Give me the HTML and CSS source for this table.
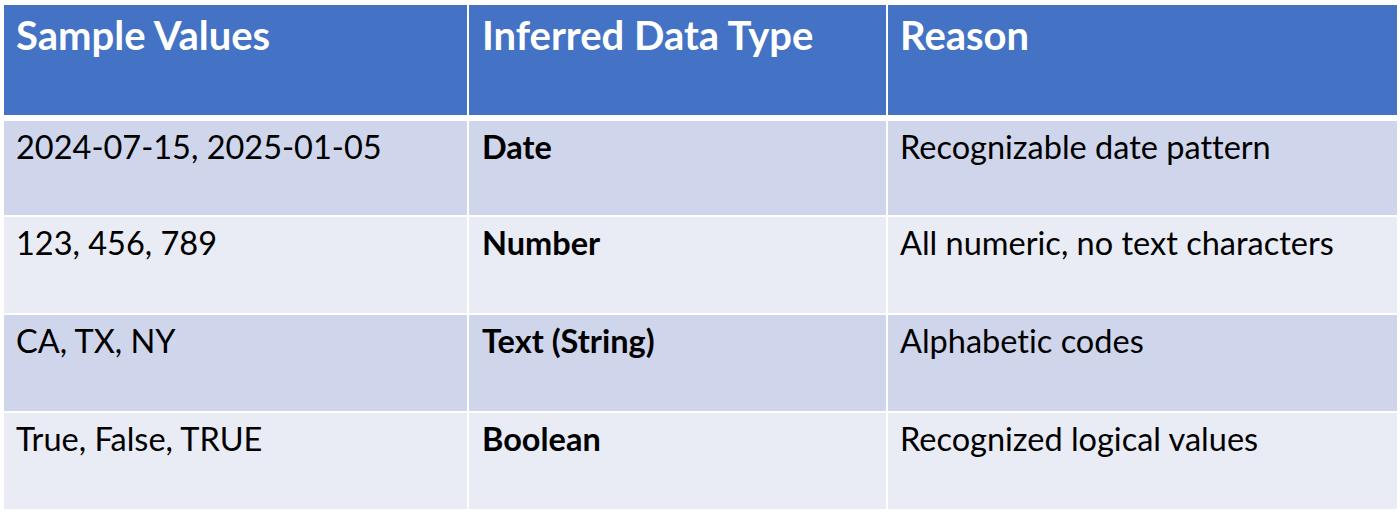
FILE: index.html
```html
<!DOCTYPE html>
<html>
<head>
<meta charset="utf-8">
<link rel="stylesheet" href="styles.css">
</head>
<body>
<div class="table">
  <div class="row head">
    <div class="cell c1">Sample Values</div>
    <div class="cell c2">Inferred Data Type</div>
    <div class="cell c3">Reason</div>
  </div>
  <div class="row odd r1">
    <div class="cell c1">2024-07-15, 2025-01-05</div>
    <div class="cell c2 b">Date</div>
    <div class="cell c3">Recognizable date pattern</div>
  </div>
  <div class="row even">
    <div class="cell c1">123, 456, 789</div>
    <div class="cell c2 b">Number</div>
    <div class="cell c3">All numeric, no text characters</div>
  </div>
  <div class="row odd">
    <div class="cell c1">CA, TX, NY</div>
    <div class="cell c2 b">Text (String)</div>
    <div class="cell c3">Alphabetic codes</div>
  </div>
  <div class="row even">
    <div class="cell c1">True, False, TRUE</div>
    <div class="cell c2 b">Boolean</div>
    <div class="cell c3">Recognized logical values</div>
  </div>
</div>
</body>
</html>
```

FILE: styles.css
```css
html, body {
  margin: 0;
  padding: 0;
  background: #ffffff;
}
body {
  font-family: "Lato", "Open Sans", sans-serif;
  font-variant-ligatures: none;
  color: #000000;
}
.table {
  display: flex;
  flex-direction: column;
  gap: 2px;
  padding: 5px 3px 0 4px;
}
.row {
  display: grid;
  grid-template-columns: 463px 417px 509px;
  column-gap: 2px;
  height: 96px;
}
.row.head {
  height: 110px;
  margin-bottom: 4px;
}
.row.r1 {
  height: 94px;
}
.cell {
  padding: 6px 12px 0 12px;
  font-size: 32.5px;
  line-height: 1.2;
  box-sizing: border-box;
}
.c2 {
  padding-left: 13px;
}
.head .cell {
  background: #4472c4;
  color: #ffffff;
  font-weight: 700;
  font-size: 40px;
  padding-top: 6px;
}
.odd .cell {
  background: #cfd5ea;
}
.even .cell {
  background: #e9ebf5;
}
.b {
  font-weight: 700;
}
```
